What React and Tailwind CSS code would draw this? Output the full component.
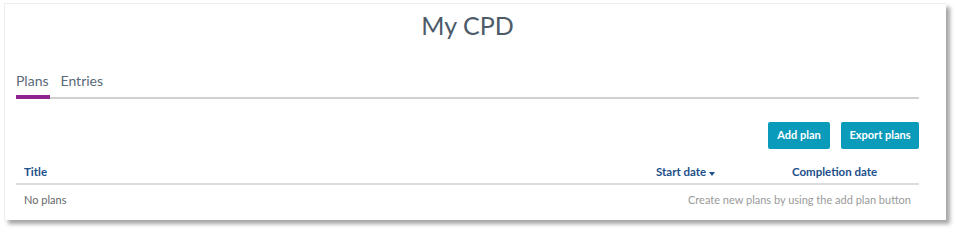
export default function App() {
  return (
    <div className="w-[957px] h-[234px] bg-white" style={{ fontFamily: 'Lato, "Open Sans", sans-serif' }}>
      <div className="pt-[3px] pl-[4px]">
        <div className="w-[942px] h-[217px] bg-white border-t border-l border-[#eeeeee] shadow-[4px_4px_4px_rgba(0,0,0,0.35)] pl-[11px] pr-[27px]">
          {/* Heading */}
          <h1 className="text-center text-[25px] leading-[34px] pt-[4px] text-[#4d5b69]">My CPD</h1>

          {/* Tabs */}
          <div className="mt-[29px] flex border-b-2 border-[#d0d0d0]">
            <div className="pb-[4px] border-b-4 border-[#8e2490] -mb-[2px] text-[14px] leading-[20px] text-[#5a6a7a] pr-[1px]">Plans</div>
            <div className="ml-[11px] pb-[4px] text-[14px] leading-[20px] text-[#5a6a7a]">Entries</div>
          </div>

          {/* Actions */}
          <div className="flex justify-end gap-[11px] mt-[23px]">
            <button className="h-[27px] w-[62px] bg-[#0a9bbb] text-white text-[11px] font-bold rounded-[2px]">Add plan</button>
            <button className="h-[27px] w-[78px] bg-[#0a9bbb] text-white text-[11px] font-bold rounded-[2px]">Export plans</button>
          </div>

          {/* Table */}
          <div className="mt-[12px] flex items-center h-[24px] border-b-2 border-[#dcdcdc] text-[11.5px] font-bold text-[#1d4f8a]">
            <div className="pl-[8px] flex-1">Title</div>
            <div className="w-[136px] flex items-center">
              Start date
              <svg width="6" height="4" viewBox="0 0 6 4" className="ml-[3px] mt-[3px]"><path d="M0 0h6L3 4z" fill="#1d4f8a" /></svg>
            </div>
            <div className="w-[127px]">Completion date</div>
          </div>
          <div className="flex items-center h-[31px] text-[11px]">
            <div className="pl-[8px] flex-1 text-[#666666]">No plans</div>
            <div className="pr-[8px] text-[#9a9a9a]">Create new plans by using the add plan button</div>
          </div>
        </div>
      </div>
    </div>
  );
}
